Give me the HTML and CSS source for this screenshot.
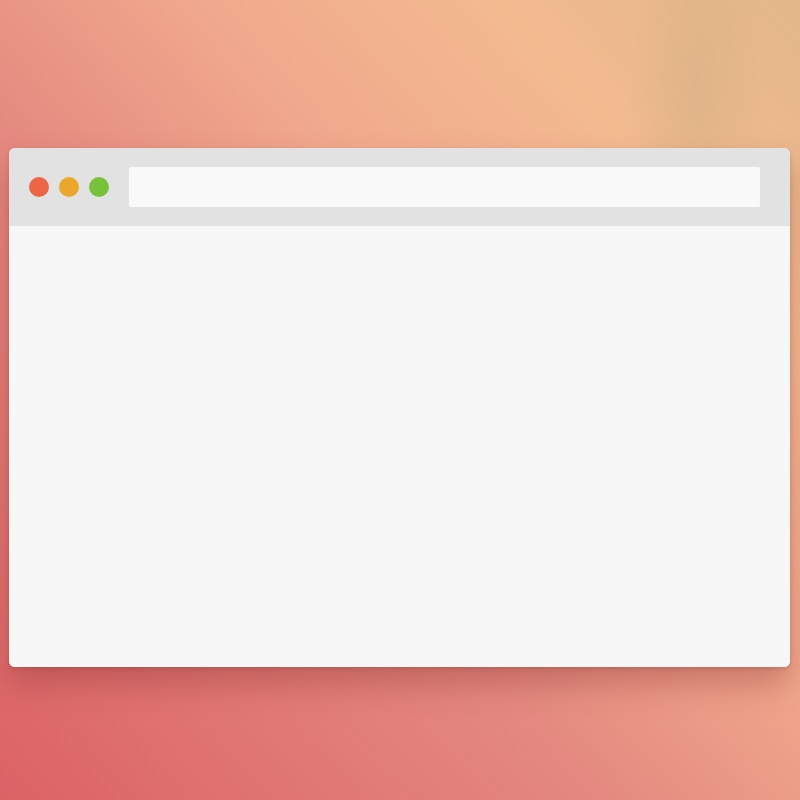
FILE: index.html
```html
<!DOCTYPE html>
<html>
<head>
<meta charset="utf-8">
<link rel="stylesheet" href="styles.css">
</head>
<body>
<div class="stage">
  <div class="window">
    <div class="titlebar">
      <div class="dots">
        <span class="dot red"></span>
        <span class="dot orange"></span>
        <span class="dot green"></span>
      </div>
      <div class="address"></div>
    </div>
    <div class="content"></div>
  </div>
</div>
</body>
</html>
```
FILE: styles.css
```css
html, body {
  margin: 0;
  padding: 0;
  width: 800px;
  height: 800px;
  overflow: hidden;
}
.stage {
  width: 800px;
  height: 800px;
  box-sizing: border-box;
  padding: 148px 10px 0 9px;
  background:
    radial-gradient(ellipse 70px 180px at 87% 12%, rgba(210,175,130,0.5), rgba(210,175,130,0) 100%),
    linear-gradient(48deg, #dc6266 0%, #e48a80 40%, #f0a88c 60%, #f3ba90 80%, #e2b78a 100%);
  font-family: "Liberation Sans", Arial, sans-serif;
}
.window {
  width: 781px;
  height: 519px;
  border-radius: 6px;
  overflow: hidden;
  background: #f7f7f7;
  box-shadow: 0 18px 30px rgba(140, 50, 50, 0.35), 0 2px 4px rgba(120, 50, 40, 0.2);
  display: flex;
  flex-direction: column;
}
.titlebar {
  height: 78px;
  background: #e2e2e2;
  display: flex;
  align-items: center;
  padding: 0 30px 0 20px;
  gap: 20px;
  flex: none;
}
.dots {
  display: flex;
  gap: 10px;
}
.dot {
  width: 20px;
  height: 20px;
  border-radius: 50%;
  display: block;
}
.red { background: #ec6544; }
.orange { background: #eaa72c; }
.green { background: #78c23a; }
.address {
  flex: 1;
  height: 40px;
  background: #f9f9f9;
  border-radius: 2px;
}
.content {
  flex: 1;
  background: #f7f7f7;
}
```
